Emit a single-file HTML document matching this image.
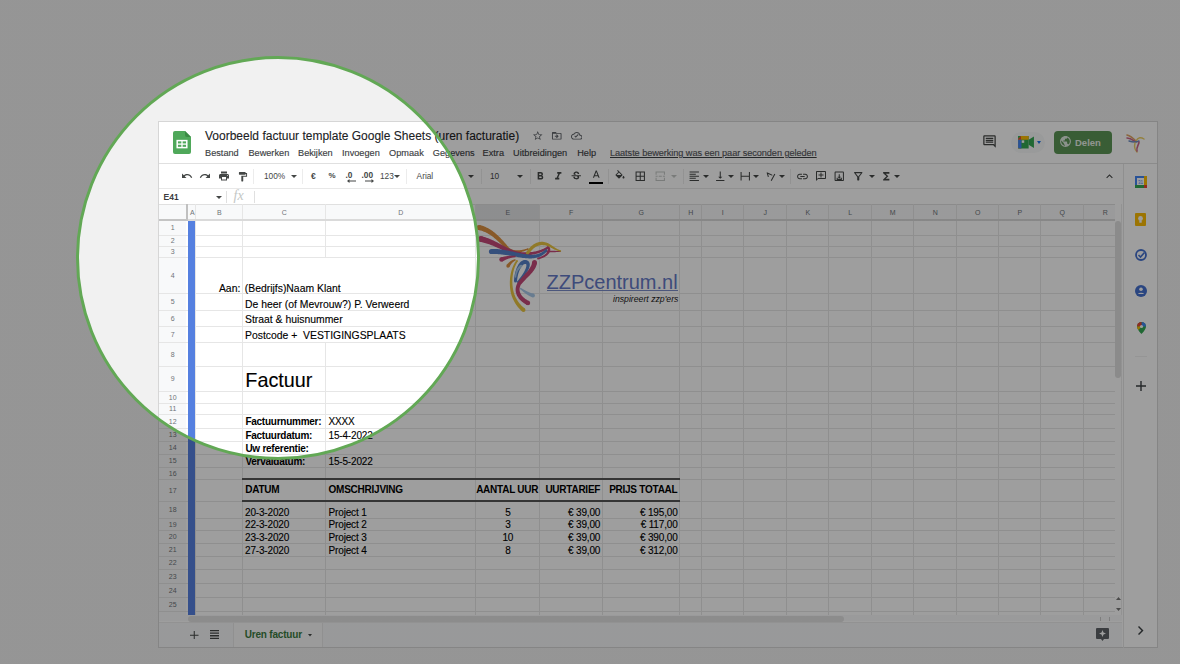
<!DOCTYPE html><html><head><meta charset="utf-8"><style>
*{box-sizing:border-box}
body{margin:0;width:1180px;height:664px;overflow:hidden;background:#f1f1f1;position:relative;font-family:"Liberation Sans",sans-serif}
.a{position:absolute}
.t{position:absolute;white-space:nowrap;line-height:1}
.hl{position:absolute;height:1px;background:#e6e6e6}
.vl{position:absolute;width:1px;background:#e6e6e6}
.rh{position:absolute;left:158px;width:28px;text-align:center;font-size:7px;color:#6f7479;line-height:1}
.ch{position:absolute;top:209px;text-align:center;font-size:7px;color:#6f7479;line-height:1;padding-left:1.5px}
.cell{position:absolute;white-space:nowrap;font-size:9.35px;color:#000;line-height:1}
.b{font-weight:bold}
.menu{position:absolute;top:149px;font-size:9.2px;color:#3c4043;line-height:1;white-space:nowrap;-webkit-text-stroke:0.15px #3c4043}
</style></head><body>
<div class="a" style="left:158px;top:121px;width:1000px;height:527px;background:#fff;border:1px solid #d6d6d6"></div><svg class="a" style="left:173px;top:131px" width="18" height="23" viewBox="0 0 18 23">
<path d="M0 2a2 2 0 0 1 2-2h10l6 6v15a2 2 0 0 1-2 2H2a2 2 0 0 1-2-2z" fill="#4fa85a"/>
<path d="M12 0l6 6h-4a2 2 0 0 1-2-2z" fill="#3a8a44"/>
<rect x="4.2" y="9.6" width="9.6" height="7" fill="none" stroke="#fff" stroke-width="1.5"/>
<line x1="4" y1="13.1" x2="14" y2="13.1" stroke="#fff" stroke-width="1.3"/>
<line x1="9" y1="9.5" x2="9" y2="17" stroke="#fff" stroke-width="1.3"/>
</svg><div class="t" style="left:205px;top:130px;font-size:12px;color:#202124;-webkit-text-stroke:0.1px #202124">Voorbeeld factuur template Google Sheets (uren facturatie)</div><div class="menu" style="left:205px">Bestand</div><div class="menu" style="left:248.4px">Bewerken</div><div class="menu" style="left:298px">Bekijken</div><div class="menu" style="left:342px">Invoegen</div><div class="menu" style="left:389.1px">Opmaak</div><div class="menu" style="left:432.8px">Gegevens</div><div class="menu" style="left:482.6px">Extra</div><div class="menu" style="left:513.1px">Uitbreidingen</div><div class="menu" style="left:577.2px">Help</div><div class="menu" style="left:610px;color:#5f6368;text-decoration:underline;letter-spacing:-0.07px">Laatste bewerking was een paar seconden geleden</div><div class="a" style="left:159px;top:163px;width:998px;height:1px;background:#e0e0e0"></div><div class="a" style="left:159px;top:188px;width:964px;height:1px;background:#e8e8e8"></div><div class="t" style="left:163.5px;top:192.5px;font-size:8.6px;color:#202124;-webkit-text-stroke:0.2px #202124">E41</div><div class="a" style="left:159px;top:204px;width:956px;height:16px;background:#f8f9fa;border-top:1px solid #e0e0e0"></div><div class="a" style="left:159px;top:220px;width:27px;height:395px;background:#f8f9fa"></div><div class="hl" style="left:159px;top:235px;width:956px"></div><div class="hl" style="left:159px;top:246px;width:956px"></div><div class="hl" style="left:159px;top:257px;width:956px"></div><div class="hl" style="left:159px;top:293px;width:956px"></div><div class="hl" style="left:159px;top:310px;width:956px"></div><div class="hl" style="left:159px;top:326px;width:956px"></div><div class="hl" style="left:159px;top:342px;width:956px"></div><div class="hl" style="left:159px;top:366px;width:956px"></div><div class="hl" style="left:159px;top:391px;width:956px"></div><div class="hl" style="left:159px;top:403px;width:956px"></div><div class="hl" style="left:159px;top:414px;width:956px"></div><div class="hl" style="left:159px;top:428px;width:956px"></div><div class="hl" style="left:159px;top:441px;width:956px"></div><div class="hl" style="left:159px;top:454px;width:956px"></div><div class="hl" style="left:159px;top:467px;width:956px"></div><div class="hl" style="left:159px;top:479px;width:956px"></div><div class="hl" style="left:159px;top:501px;width:956px"></div><div class="hl" style="left:159px;top:518px;width:956px"></div><div class="hl" style="left:159px;top:530px;width:956px"></div><div class="hl" style="left:159px;top:543px;width:956px"></div><div class="hl" style="left:159px;top:556px;width:956px"></div><div class="hl" style="left:159px;top:569px;width:956px"></div><div class="hl" style="left:159px;top:583px;width:956px"></div><div class="hl" style="left:159px;top:597px;width:956px"></div><div class="hl" style="left:159px;top:611px;width:956px"></div><div class="vl" style="left:195px;top:204px;height:411px"></div><div class="vl" style="left:242px;top:204px;height:411px"></div><div class="vl" style="left:325px;top:204px;height:411px"></div><div class="vl" style="left:475px;top:204px;height:411px"></div><div class="vl" style="left:539px;top:204px;height:411px"></div><div class="vl" style="left:602px;top:204px;height:411px"></div><div class="vl" style="left:679px;top:204px;height:411px"></div><div class="vl" style="left:701px;top:204px;height:411px"></div><div class="vl" style="left:743px;top:204px;height:411px"></div><div class="vl" style="left:786px;top:204px;height:411px"></div><div class="vl" style="left:828px;top:204px;height:411px"></div><div class="vl" style="left:871px;top:204px;height:411px"></div><div class="vl" style="left:913px;top:204px;height:411px"></div><div class="vl" style="left:956px;top:204px;height:411px"></div><div class="vl" style="left:998px;top:204px;height:411px"></div><div class="vl" style="left:1040px;top:204px;height:411px"></div><div class="vl" style="left:1083px;top:204px;height:411px"></div><div class="a" style="left:159px;top:219px;width:956px;height:2px;background:#dadada"></div><div class="a" style="left:186px;top:204px;width:2px;height:16px;background:#c0c0c0"></div><div class="a" style="left:159px;top:218.5px;width:29px;height:2px;background:#c4c4c4"></div><div class="a" style="left:188px;top:221px;width:7px;height:394px;background:#5580e0"></div><div class="rh" style="left:158.7px;top:224.0px">1</div><div class="rh" style="left:158.7px;top:237.0px">2</div><div class="rh" style="left:158.7px;top:248.0px">3</div><div class="rh" style="left:158.7px;top:271.5px">4</div><div class="rh" style="left:158.7px;top:298.0px">5</div><div class="rh" style="left:158.7px;top:314.5px">6</div><div class="rh" style="left:158.7px;top:330.5px">7</div><div class="rh" style="left:158.7px;top:350.5px">8</div><div class="rh" style="left:158.7px;top:375.0px">9</div><div class="rh" style="left:158.7px;top:393.5px">10</div><div class="rh" style="left:158.7px;top:405.0px">11</div><div class="rh" style="left:158.7px;top:417.5px">12</div><div class="rh" style="left:158.7px;top:431.0px">13</div><div class="rh" style="left:158.7px;top:444.0px">14</div><div class="rh" style="left:158.7px;top:457.0px">15</div><div class="rh" style="left:158.7px;top:469.5px">16</div><div class="rh" style="left:158.7px;top:486.5px">17</div><div class="rh" style="left:158.7px;top:506.0px">18</div><div class="rh" style="left:158.7px;top:520.5px">19</div><div class="rh" style="left:158.7px;top:533.0px">20</div><div class="rh" style="left:158.7px;top:546.0px">21</div><div class="rh" style="left:158.7px;top:559.0px">22</div><div class="rh" style="left:158.7px;top:572.5px">23</div><div class="rh" style="left:158.7px;top:586.5px">24</div><div class="rh" style="left:158.7px;top:600.5px">25</div><div class="ch" style="left:188px;width:7px">A</div><div class="ch" style="left:195px;width:47px">B</div><div class="ch" style="left:242px;width:83px">C</div><div class="ch" style="left:325px;width:150px">D</div><div class="ch" style="left:475px;width:64px">E</div><div class="ch" style="left:539px;width:63px">F</div><div class="ch" style="left:602px;width:77px">G</div><div class="ch" style="left:679px;width:22px">H</div><div class="ch" style="left:701px;width:42px">I</div><div class="ch" style="left:743px;width:43px">J</div><div class="ch" style="left:786px;width:42px">K</div><div class="ch" style="left:828px;width:43px">L</div><div class="ch" style="left:871px;width:42px">M</div><div class="ch" style="left:913px;width:43px">N</div><div class="ch" style="left:956px;width:42px">O</div><div class="ch" style="left:998px;width:42px">P</div><div class="ch" style="left:1040px;width:43px">Q</div><div class="ch" style="left:1083px;width:43px">R</div><div class="a" style="left:325px;top:258px;width:1px;height:35px;background:#fff"></div><div class="a" style="left:325px;top:294px;width:1px;height:16px;background:#fff"></div><div class="a" style="left:325px;top:311px;width:1px;height:15px;background:#fff"></div><div class="a" style="left:325px;top:327px;width:1px;height:15px;background:#fff"></div><div class="cell" style="right:939.70px;top:283.70px;font-size:10.4px;-webkit-text-stroke:0.12px #000;color:#000;letter-spacing:0px;">Aan:</div><div class="cell" style="left:244.8px;top:283.70px;font-size:10.4px;-webkit-text-stroke:0.12px #000;color:#000;letter-spacing:0px;">(Bedrijfs)Naam Klant</div><div class="cell" style="left:245px;top:299.50px;font-size:10.4px;-webkit-text-stroke:0.12px #000;color:#000;letter-spacing:0px;">De heer (of Mevrouw?) P. Verweerd</div><div class="cell" style="left:245px;top:315.40px;font-size:10.4px;-webkit-text-stroke:0.12px #000;color:#000;letter-spacing:0px;">Straat &amp; huisnummer</div><div class="cell" style="left:245px;top:330.90px;font-size:10.4px;-webkit-text-stroke:0.12px #000;color:#000;letter-spacing:0px;">Postcode +&nbsp; VESTIGINGSPLAATS</div><div class="cell" style="left:245.3px;top:370.54px;font-size:19.8px;-webkit-text-stroke:0.12px #000;color:#000;letter-spacing:0px;">Factuur</div><div class="cell" style="left:245.4px;top:416.94px;font-size:10px;font-weight:bold;color:#000;letter-spacing:-0.25px;">Factuurnummer:</div><div class="cell" style="left:328.5px;top:416.94px;font-size:10px;-webkit-text-stroke:0.12px #000;color:#000;letter-spacing:-0.17px;">XXXX</div><div class="cell" style="left:245.4px;top:430.54px;font-size:10px;font-weight:bold;color:#000;letter-spacing:-0.25px;">Factuurdatum:</div><div class="cell" style="left:328.5px;top:430.54px;font-size:10px;-webkit-text-stroke:0.12px #000;color:#000;letter-spacing:-0.17px;">15-4-2022</div><div class="cell" style="left:245.4px;top:443.64px;font-size:10px;font-weight:bold;color:#000;letter-spacing:-0.25px;">Uw referentie:</div><div class="cell" style="left:245.4px;top:456.64px;font-size:10px;font-weight:bold;color:#000;letter-spacing:-0.25px;">Vervaldatum:</div><div class="cell" style="left:328.5px;top:456.64px;font-size:10px;-webkit-text-stroke:0.12px #000;color:#000;letter-spacing:-0.17px;">15-5-2022</div><div class="a" style="left:242px;top:478px;width:438px;height:2px;background:#555"></div><div class="a" style="left:242px;top:499.5px;width:438px;height:2px;background:#555"></div><div class="cell" style="left:245.2px;top:484.94px;font-size:10px;font-weight:bold;color:#000;letter-spacing:-0.25px;">DATUM</div><div class="cell" style="left:328.6px;top:484.94px;font-size:10px;font-weight:bold;color:#000;letter-spacing:-0.25px;">OMSCHRIJVING</div><div class="cell" style="right:641.75px;top:484.94px;font-size:10px;font-weight:bold;color:#000;letter-spacing:-0.25px;">AANTAL UUR</div><div class="cell" style="right:579.85px;top:484.94px;font-size:10px;font-weight:bold;color:#000;letter-spacing:-0.25px;">UURTARIEF</div><div class="cell" style="right:502.55px;top:484.94px;font-size:10px;font-weight:bold;color:#000;letter-spacing:-0.25px;">PRIJS TOTAAL</div><div class="cell" style="left:245px;top:507.64px;font-size:10px;-webkit-text-stroke:0.12px #000;color:#000;letter-spacing:-0.17px;">20-3-2020</div><div class="cell" style="left:328.6px;top:507.64px;font-size:10px;-webkit-text-stroke:0.12px #000;color:#000;letter-spacing:-0.17px;">Project 1</div><div class="cell" style="left:457.88px;width:100px;text-align:center;top:507.64px;font-size:10px;-webkit-text-stroke:0.12px #000;color:#000;letter-spacing:-0.17px;">5</div><div class="cell" style="right:579.77px;top:507.64px;font-size:10px;-webkit-text-stroke:0.12px #000;color:#000;letter-spacing:-0.17px;">€ 39,00</div><div class="cell" style="right:502.47px;top:507.64px;font-size:10px;-webkit-text-stroke:0.12px #000;color:#000;letter-spacing:-0.17px;">€ 195,00</div><div class="cell" style="left:245px;top:520.43px;font-size:10px;-webkit-text-stroke:0.12px #000;color:#000;letter-spacing:-0.17px;">22-3-2020</div><div class="cell" style="left:328.6px;top:520.43px;font-size:10px;-webkit-text-stroke:0.12px #000;color:#000;letter-spacing:-0.17px;">Project 2</div><div class="cell" style="left:457.88px;width:100px;text-align:center;top:520.43px;font-size:10px;-webkit-text-stroke:0.12px #000;color:#000;letter-spacing:-0.17px;">3</div><div class="cell" style="right:579.77px;top:520.43px;font-size:10px;-webkit-text-stroke:0.12px #000;color:#000;letter-spacing:-0.17px;">€ 39,00</div><div class="cell" style="right:502.47px;top:520.43px;font-size:10px;-webkit-text-stroke:0.12px #000;color:#000;letter-spacing:-0.17px;">€ 117,00</div><div class="cell" style="left:245px;top:533.24px;font-size:10px;-webkit-text-stroke:0.12px #000;color:#000;letter-spacing:-0.17px;">23-3-2020</div><div class="cell" style="left:328.6px;top:533.24px;font-size:10px;-webkit-text-stroke:0.12px #000;color:#000;letter-spacing:-0.17px;">Project 3</div><div class="cell" style="left:457.88px;width:100px;text-align:center;top:533.24px;font-size:10px;-webkit-text-stroke:0.12px #000;color:#000;letter-spacing:-0.17px;">10</div><div class="cell" style="right:579.77px;top:533.24px;font-size:10px;-webkit-text-stroke:0.12px #000;color:#000;letter-spacing:-0.17px;">€ 39,00</div><div class="cell" style="right:502.47px;top:533.24px;font-size:10px;-webkit-text-stroke:0.12px #000;color:#000;letter-spacing:-0.17px;">€ 390,00</div><div class="cell" style="left:245px;top:545.83px;font-size:10px;-webkit-text-stroke:0.12px #000;color:#000;letter-spacing:-0.17px;">27-3-2020</div><div class="cell" style="left:328.6px;top:545.83px;font-size:10px;-webkit-text-stroke:0.12px #000;color:#000;letter-spacing:-0.17px;">Project 4</div><div class="cell" style="left:457.88px;width:100px;text-align:center;top:545.83px;font-size:10px;-webkit-text-stroke:0.12px #000;color:#000;letter-spacing:-0.17px;">8</div><div class="cell" style="right:579.77px;top:545.83px;font-size:10px;-webkit-text-stroke:0.12px #000;color:#000;letter-spacing:-0.17px;">€ 39,00</div><div class="cell" style="right:502.47px;top:545.83px;font-size:10px;-webkit-text-stroke:0.12px #000;color:#000;letter-spacing:-0.17px;">€ 312,00</div><svg class="a" style="left:181.00px;top:170.30px;" width="12" height="12" viewBox="0 0 24 24"><path d="M12.5 8c-2.65 0-5.05.99-6.9 2.6L2 7v9h9l-3.62-3.62c1.39-1.16 3.16-1.88 5.12-1.88 3.54 0 6.550 2.31 7.6 5.5l2.37-.78C21.08 11.03 17.15 8 12.5 8z" fill="#444746"/></svg><svg class="a" style="left:199.30px;top:170.30px;" width="12" height="12" viewBox="0 0 24 24"><path d="M18.4 10.6C16.55 8.99 14.15 8 11.5 8c-4.65 0-8.58 3.03-9.960 7.22L3.9 16c1.05-3.19 4.05-5.5 7.6-5.5 1.95 0 3.73.72 5.12 1.88L13 16h9V7l-3.6 3.6z" fill="#444746"/></svg><svg class="a" style="left:217.80px;top:170.30px;" width="12" height="12" viewBox="0 0 24 24"><path d="M19 8H5c-1.66 0-3 1.34-3 3v6h4v4h12v-4h4v-6c0-1.66-1.34-3-3-3zm-3 11H8v-5h8v5zm3-7c-.55 0-1-.45-1-1s.45-1 1-1 1 .45 1 1-.45 1-1 1zm-1-9H6v4h12V3z" fill="#444746"/></svg><svg class="a" style="left:236.55px;top:170.55px;" width="11.5" height="11.5" viewBox="0 0 24 24"><path d="M18 4V3c0-.55-.45-1-1-1H5c-.55 0-1 .45-1 1v4c0 .55.45 1 1 1h12c.55 0 1-.45 1-1V6h1v4H9v11c0 .55.45 1 1 1h2c.55 0 1-.45 1-1v-9h8V4h-3z" fill="#444746"/></svg><div class="a" style="left:253px;top:169px;width:1px;height:15px;background:#ececec"></div><div class="t" style="left:264px;top:172.3px;font-size:8.3px;color:#444746">100%</div><svg class="a" style="left:291.2px;top:174.8px" width="6" height="3" viewBox="0 0 6 3"><path d="M0 0h6L3 3z" fill="#444746"/></svg><div class="a" style="left:302px;top:169px;width:1px;height:15px;background:#ececec"></div><div class="t" style="left:311px;top:172.10000000000002px;font-size:8.5px;color:#444746;font-weight:bold">€</div><div class="t" style="left:328.5px;top:172.10000000000002px;font-size:8px;color:#444746;font-weight:bold">%</div><div class="t" style="left:345.5px;top:171.3px;font-size:8.3px;color:#444746;font-weight:bold">.0</div><svg class="a" style="left:347px;top:179.3px" width="9" height="4" viewBox="0 0 9 4"><path d="M0 2l2.5-2v1.4H9v1.2H2.5V4z" fill="#444746"/></svg><div class="t" style="left:361.5px;top:171.3px;font-size:8.3px;color:#444746;font-weight:bold">.00</div><svg class="a" style="left:365px;top:179.3px" width="9" height="4" viewBox="0 0 9 4"><path d="M9 2l-2.5-2v1.4H0v1.2h6.5V4z" fill="#444746"/></svg><div class="t" style="left:380px;top:172.10000000000002px;font-size:8.3px;color:#444746">123</div><svg class="a" style="left:394.3px;top:174.8px" width="6" height="3" viewBox="0 0 6 3"><path d="M0 0h6L3 3z" fill="#444746"/></svg><div class="a" style="left:406px;top:169px;width:1px;height:15px;background:#ececec"></div><div class="t" style="left:416.6px;top:172.10000000000002px;font-size:8.3px;color:#444746">Arial</div><svg class="a" style="left:467.8px;top:174.8px" width="6" height="3" viewBox="0 0 6 3"><path d="M0 0h6L3 3z" fill="#444746"/></svg><div class="a" style="left:480.5px;top:169px;width:1px;height:15px;background:#ececec"></div><div class="t" style="left:490px;top:172.10000000000002px;font-size:8.3px;color:#444746">10</div><svg class="a" style="left:517px;top:174.8px" width="6" height="3" viewBox="0 0 6 3"><path d="M0 0h6L3 3z" fill="#444746"/></svg><div class="a" style="left:529.5px;top:169px;width:1px;height:15px;background:#ececec"></div><svg class="a" style="left:533.75px;top:170.05px;" width="12.5" height="12.5" viewBox="0 0 24 24"><path d="M15.6 10.79c.97-.67 1.650-1.77 1.65-2.79 0-2.26-1.75-4-4-4H7v14h7.04c2.09 0 3.71-1.7 3.71-3.79 0-1.52-.86-2.82-2.15-3.42zM10 6.5h3c.83 0 1.5.67 1.5 1.5s-.67 1.5-1.5 1.5h-3v-3zm3.5 9H10v-3h3.5c.83 0 1.5.67 1.5 1.5s-.67 1.5-1.5 1.5z" fill="#444746"/></svg><svg class="a" style="left:552.25px;top:170.05px;" width="12.5" height="12.5" viewBox="0 0 24 24"><path d="M10 4v3h2.21l-3.42 8H6v3h8v-3h-2.21l3.42-8H18V4z" fill="#444746"/></svg><svg class="a" style="left:570.05px;top:170.05px;" width="12.5" height="12.5" viewBox="0 0 24 24"><path d="M7.24 8.75c-.26-.48-.39-1.03-.39-1.67 0-.61.13-1.16.4-1.67.26-.5.63-.93 1.11-1.29.48-.35 1.05-.63 1.7-.83.66-.19 1.39-.29 2.18-.29.81 0 1.54.11 2.21.34.66.22 1.230.54 1.69.94.47.4.83.88 1.08 1.43s.38 1.15.38 1.81h-3.01c0-.31-.05-.59-.15-.85-.09-.27-.24-.49-.44-.68-.2-.19-.45-.33-.75-.44-.3-.1-.66-.16-1.06-.16-.39 0-.74.04-1.03.13s-.53.21-.72.36c-.19.16-.34.34-.44.55-.1.21-.15.43-.15.66 0 .48.25.88.74 1.21.38.25.77.48 1.41.7H7.39c-.05-.08-.11-.17-.15-.25zM21 12v-2H3v2h9.62c.18.07.4.14.55.2.37.17.66.34.87.51s.35.36.43.57c.07.2.11.43.11.69 0 .23-.05.45-.14.66-.09.2-.23.38-.42.53-.19.15-.42.26-.71.35-.29.08-.63.13-1.01.13-.43 0-.83-.04-1.18-.13s-.66-.23-.91-.42c-.25-.19-.45-.44-.59-.75s-.25-.76-.25-1.21H6.4c0 .55.08 1.13.24 1.58s.37.85.65 1.21c.28.35.6.66.98.92.37.26.78.48 1.22.65.44.17.9.3 1.38.39.48.08.96.13 1.44.13.8 0 1.53-.09 2.18-.28s1.21-.45 1.67-.79c.46-.34.82-.77 1.07-1.27s.38-1.07.38-1.71c0-.6-.1-1.14-.31-1.61-.05-.11-.11-.23-.17-.33H21z" fill="#444746"/></svg><svg class="a" style="left:589.55px;top:168.55px;" width="12.5" height="12.5" viewBox="0 0 24 24"><path d="M11 3L5.5 17h2.25l1.12-3h6.25l1.12 3h2.25L13 3h-2zm-1.38 9L12 5.67 14.38 12H9.62z" fill="#444746"/></svg><div class="a" style="left:589px;top:181.5px;width:13.5px;height:2.5px;background:#000"></div><div class="a" style="left:608px;top:169px;width:1px;height:15px;background:#ececec"></div><svg class="a" style="left:614.40px;top:170.30px;" width="12" height="12" viewBox="0 0 24 24"><path d="M16.56 8.94L7.62 0 6.21 1.41l2.38 2.38-5.15 5.150c-.59.59-.59 1.54 0 2.12l5.5 5.5c.29.29.68.44 1.06.44s.77-.15 1.06-.44l5.5-5.5c.59-.58.59-1.53 0-2.12zM5.21 10L10 5.21 14.79 10H5.21zM19 11.5s-2 2.17-2 3.5c0 1.1.9 2 2 2s2-.9 2-2c0-1.33-2-3.5-2-3.5z" fill="#444746"/></svg><svg class="a" style="left:633.75px;top:170.05px;" width="12.5" height="12.5" viewBox="0 0 24 24"><path d="M3 3v18h18V3H3zm8 16H5v-6h6v6zm0-8H5V5h6v6zm8 8h-6v-6h6v6zm0-8h-6V5h6v6z" fill="#444746"/></svg><svg class="a" style="left:653.75px;top:170.05px;" width="12.5" height="12.5" viewBox="0 0 24 24"><path d="M3 3h18v6h-2V5H5v4H3zM3 15h2v4h14v-4h2v6H3zM3 11h4v2H3zM9 11h6v2H9zM17 11h4v2h-4z" fill="#c4c7c5"/></svg><svg class="a" style="left:671.2px;top:174.8px" width="6" height="3" viewBox="0 0 6 3"><path d="M0 0h6L3 3z" fill="#c4c7c5"/></svg><div class="a" style="left:682.5px;top:169px;width:1px;height:15px;background:#ececec"></div><svg class="a" style="left:687.95px;top:170.05px;" width="12.5" height="12.5" viewBox="0 0 24 24"><path d="M15 15H3v2h12v-2zm0-8H3v2h12V7zM3 13h18v-2H3v2zm0 8h18v-2H3v2zM3 3v2h18V3H3z" fill="#444746"/></svg><svg class="a" style="left:703px;top:174.8px" width="6" height="3" viewBox="0 0 6 3"><path d="M0 0h6L3 3z" fill="#444746"/></svg><svg class="a" style="left:713.55px;top:170.05px;" width="12.5" height="12.5" viewBox="0 0 24 24"><path d="M16 13h-3V3h-2v10H8l4 4 4-4zM4 19v2h16v-2H4z" fill="#444746"/></svg><svg class="a" style="left:728.4px;top:174.8px" width="6" height="3" viewBox="0 0 6 3"><path d="M0 0h6L3 3z" fill="#444746"/></svg><svg class="a" style="left:739.05px;top:170.05px;" width="12.5" height="12.5" viewBox="0 0 24 24"><path d="M3 4h2v16H3zM19 4h2v16h-2zM5 11h14v2H5z" fill="#444746"/></svg><svg class="a" style="left:753px;top:174.8px" width="6" height="3" viewBox="0 0 6 3"><path d="M0 0h6L3 3z" fill="#444746"/></svg><svg class="a" style="left:764.85px;top:170.05px;" width="12.5" height="12.5" viewBox="0 0 24 24"><path d="M3 5h2l9 4v2L5 7zM3 5l2 0 2.5 8-2 .5zM11 20l7-13 1.8 1-7 13z" fill="#444746"/></svg><svg class="a" style="left:779.2px;top:174.8px" width="6" height="3" viewBox="0 0 6 3"><path d="M0 0h6L3 3z" fill="#444746"/></svg><div class="a" style="left:789.5px;top:169px;width:1px;height:15px;background:#ececec"></div><svg class="a" style="left:795.80px;top:169.80px;" width="13" height="13" viewBox="0 0 24 24"><path d="M3.9 12c0-1.71 1.39-3.1 3.1-3.1h4V7H7c-2.76 0-5 2.24-5 5s2.24 5 5 5h4v-1.9H7c-1.71 0-3.1-1.39-3.1-3.1zM8 13h8v-2H8v2zm9-6h-4v1.9h4c1.71 0 3.1 1.39 3.1 3.1s-1.39 3.1-3.1 3.1h-4V17h4c2.76 0 5-2.24 5-5s-2.24-5-5-5z" fill="#444746"/></svg><svg class="a" style="left:814.70px;top:170.30px;" width="12" height="12" viewBox="0 0 24 24"><path d="M20 2H4c-1.1 0-2 .9-2 2v18l4-4h14c1.1 0 2-.9 2-2V4c0-1.1-.9-2-2-2zm0 14H6l-2 2V4h16v12zM13 5h-2v4H7v2h4v4h2v-4h4V9h-4z" fill="#444746"/></svg><svg class="a" style="left:832.75px;top:170.05px;" width="12.5" height="12.5" viewBox="0 0 24 24"><path d="M19 3H5c-1.1 0-2 .9-2 2v14c0 1.1.9 2 2 2h14c1.1 0 2-.9 2-2V5c0-1.1-.9-2-2-2zm0 16H5V5h14v14zM11 8h2v5h2.5L12 16.5 8.5 13H11zM7 15h2v2h6v-2h2v4H7z" fill="#444746"/></svg><svg class="a" style="left:851.75px;top:170.05px;" width="12.5" height="12.5" viewBox="0 0 24 24"><path d="M7 6h10l-5.01 6.3L7 6zm-2.75-.39C6.27 8.2 10 13 10 13v6c0 .55.45 1 1 1h2c.55 0 1-.45 1-1v-6s3.72-4.8 5.74-7.39c.51-.66.04-1.61-.79-1.61H5.04c-.83 0-1.3.95-.79 1.61z" fill="#444746"/></svg><svg class="a" style="left:869px;top:174.8px" width="6" height="3" viewBox="0 0 6 3"><path d="M0 0h6L3 3z" fill="#444746"/></svg><svg class="a" style="left:880.15px;top:170.05px;" width="12.5" height="12.5" viewBox="0 0 24 24"><path d="M18 4H6v2l6.5 6L6 18v2h12v-3h-7l5-5-5-5h7z" fill="#444746"/></svg><svg class="a" style="left:893.6px;top:174.8px" width="6" height="3" viewBox="0 0 6 3"><path d="M0 0h6L3 3z" fill="#444746"/></svg><svg class="a" style="left:1102.50px;top:169.80px;" width="13" height="13" viewBox="0 0 24 24"><path d="M12 8l-6 6 1.41 1.41L12 10.830l4.59 4.58L18 14z" fill="#444746"/></svg><svg class="a" style="left:531.55px;top:129.55px;" width="11.5" height="11.5" viewBox="0 0 24 24"><path d="M22 9.24l-7.19-.62L12 2 9.19 8.63 2 9.24l5.46 4.73L5.82 21 12 17.27 18.18 21l-1.63-7.03L22 9.24zM12 15.4l-3.76 2.27 1-4.28-3.32-2.88 4.38-.38L12 6.1l1.71 4.04 4.380.38-3.32 2.88 1 4.28L12 15.4z" fill="#5f6368"/></svg><svg class="a" style="left:550.85px;top:129.55px;" width="11.5" height="11.5" viewBox="0 0 24 24"><path d="M20 6h-8l-2-2H4c-1.1 0-1.99.9-1.99 2L2 18c0 1.1.9 2 2 2h16c1.1 0 2-.9 2-2V8c0-1.1-.9-2-2-2zm0 12H4V8h16v10zM12.16 12H8v2h4.16l-1.59 1.59L11.99 17 16 13.01 11.99 9l-1.41 1.41z" fill="#5f6368"/></svg><svg class="a" style="left:570.65px;top:129.55px;" width="11.5" height="11.5" viewBox="0 0 24 24"><path d="M19.35 10.04C18.67 6.59 15.64 4 12 4 9.11 4 6.6 5.64 5.35 8.04 2.34 8.36 0 10.91 0 14c0 3.31 2.69 6 6 6h13c2.76 0 5-2.24 5-5 0-2.64-2.05-4.78-4.65-4.96zM19 18H6c-2.21 0-4-1.79-4-4 0-2.05 1.53-3.76 3.56-3.97l1.07-.11.5-.95C8.08 7.14 9.94 6 12 6c2.62 0 4.88 1.86 5.39 4.43l.3 1.5 1.53.11c1.56.1 2.78 1.41 2.78 2.96 0 1.65-1.35 3-3 3zM10 16l-3-3 1.4-1.4 1.6 1.6 4.6-4.6L16 10z" fill="#5f6368"/></svg><svg class="a" style="left:982.00px;top:134.30px;" width="15" height="15" viewBox="0 0 24 24"><path d="M21.99 4c0-1.1-.89-2-1.99-2H4c-1.1 0-2 .9-2 2v12c0 1.1.9 2 2 2h14l4 4-.01-18zM20 4v13.170L18.83 16H4V4h16zM6 12h12v2H6zm0-3h12v2H6zm0-3h12v2H6z" fill="#444746"/></svg><div class="a" style="left:1011px;top:132px;width:34px;height:21px;border-radius:11px;background:#f7f8f9"></div><svg class="a" style="left:1017.5px;top:136px" width="16.5" height="12.5" viewBox="0 0 17 13">
<path d="M0 0h11v13H0z" fill="#34a853"/><path d="M0 3l3-3h8v4H3v9H0z" fill="#fbbc04"/><path d="M0 3l3-3v4H0z" fill="#ea4335"/><path d="M0 4h3.5v9H1a1 1 0 0 1-1-1z" fill="#4285f4"/>
<path d="M11 0l0 13M11 4l5.5-3.5v12L11 9z" fill="#34a853"/><rect x="3.8" y="4.5" width="2.6" height="2.6" fill="#fff"/>
</svg><svg class="a" style="left:1036.5px;top:140.5px" width="4" height="3" viewBox="0 0 4 3"><path d="M0 0h4L2 3z" fill="#1a73e8"/></svg><div class="a" style="left:1054px;top:131px;width:57.5px;height:23px;border-radius:4px;background:#5c9656"></div><svg class="a" style="left:1059.20px;top:135.30px;" width="13" height="13" viewBox="0 0 24 24"><path d="M12 2C6.48 2 2 6.48 2 12s4.48 10 10 10 10-4.48 10-10S17.52 2 12 2zm-1 17.93c-3.95-.49-7-3.85-7-7.93 0-.62.08-1.21.21-1.790L9 15v1c0 1.1.9 2 2 2v1.93zm6.9-2.54c-.26-.81-1-1.39-1.9-1.39h-1v-3c0-.55-.45-1-1-1H8v-2h2c.55 0 1-.45 1-1V7h2c1.1 0 2-.9 2-2v-.41c2.93 1.19 5 4.06 5 7.41 0 2.08-.8 3.970-2.1 5.39z" fill="#e0ece0"/></svg><div class="t" style="left:1075px;top:137.5px;font-size:9.5px;color:#e8f0e8;font-weight:bold">Delen</div><svg class="a" style="left:215.5px;top:195.5px" width="6" height="3" viewBox="0 0 6 3"><path d="M0 0h6L3 3z" fill="#444746"/></svg><div class="a" style="left:226px;top:191px;width:1px;height:12px;background:#e0e0e0"></div><div class="t" style="left:233.5px;top:189px;font-size:14px;color:#c4c7c5;font-family:Liberation Serif;font-style:italic">fx</div><div class="a" style="left:254px;top:191px;width:1px;height:12px;background:#e0e0e0"></div><div class="a" style="left:476px;top:205px;width:63px;height:14px;background:#e4e5e7"></div><div class="ch" style="left:475px;width:64px">E</div><div class="a" style="left:1115px;top:221px;width:6px;height:157px;border-radius:3px;background:#e0e0e0"></div><div class="a" style="left:1123px;top:164px;width:1px;height:484px;background:#e6e6e6"></div><svg class="a" style="left:1134.5px;top:176px" width="12" height="12" viewBox="0 0 12 12">
<rect x="0" y="0" width="12" height="12" fill="#fbbc04"/><rect x="0" y="0" width="9" height="9" fill="#4285f4"/><rect x="0" y="9" width="9" height="3" fill="#34a853"/><rect x="9" y="9" width="3" height="3" fill="#ea4335"/>
<rect x="2" y="2" width="7" height="7" fill="#fff"/><text x="5.5" y="7.6" font-size="4.5" text-anchor="middle" fill="#4285f4" font-family="Liberation Sans">31</text></svg><svg class="a" style="left:1135px;top:212.5px" width="11" height="13" viewBox="0 0 11 13">
<path d="M0 1a1 1 0 0 1 1-1h9a1 1 0 0 1 1 1v11a1 1 0 0 1-1 1H1a1 1 0 0 1-1-1z" fill="#fbbc04"/>
<circle cx="5.5" cy="5.5" r="2.4" fill="#fff"/><rect x="4.3" y="7.5" width="2.4" height="2.2" fill="#fff"/></svg><svg class="a" style="left:1134.8px;top:249px" width="12" height="12" viewBox="0 0 12 12">
<circle cx="6" cy="6" r="5" fill="none" stroke="#4470cf" stroke-width="1.8"/><path d="M3.5 6l2 2 4-4.5" fill="none" stroke="#4470cf" stroke-width="1.6"/></svg><svg class="a" style="left:1134.8px;top:285.3px" width="12" height="12" viewBox="0 0 12 12">
<circle cx="6" cy="6" r="6" fill="#4470cf"/><circle cx="6" cy="4.3" r="1.8" fill="#fff"/><path d="M2.8 9a3.5 2.3 0 0 1 6.4 0z" fill="#fff"/></svg><svg class="a" style="left:1136.5px;top:322px" width="9" height="12" viewBox="0 0 9 12">
<path d="M4.5 0A4.5 4.5 0 0 1 9 4.5C9 7.5 4.5 12 4.5 12S0 7.5 0 4.5A4.5 4.5 0 0 1 4.5 0z" fill="#34a853"/>
<path d="M4.5 0A4.5 4.5 0 0 1 9 4.5L4.5 4.5z" fill="#4285f4"/><path d="M0 4.5A4.5 4.5 0 0 1 4.5 0V4.5z" fill="#ea4335"/><path d="M0 4.5h4.5L1.5 8C.5 6.8 0 5.6 0 4.5z" fill="#fbbc04"/>
<circle cx="4.5" cy="4.5" r="1.6" fill="#fff"/></svg><div class="a" style="left:1135px;top:356px;width:12px;height:1px;background:#f0f0f0"></div><svg class="a" style="left:1136px;top:381px" width="10" height="10" viewBox="0 0 10 10"><path d="M4.3 0h1.4v4.3H10v1.4H5.7V10H4.3V5.7H0V4.3h4.3z" fill="#3c4043"/></svg><svg class="a" style="left:1137.5px;top:626px" width="6" height="9" viewBox="0 0 6 9"><path d="M1 0l4.5 4.5L1 9 0 8l3.5-3.5L0 1z" fill="#3c4043"/></svg><svg class="a" style="left:1126px;top:133px;opacity:0.75" width="19" height="20" viewBox="0 0 19 20">
<path d="M1 2c4 1 7 4 9 6" stroke="#d8862e" stroke-width="1.6" fill="none" stroke-linecap="round"/>
<path d="M1 5c4 0 7 3 9 4" stroke="#b8315f" stroke-width="1.6" fill="none" stroke-linecap="round"/>
<path d="M10 8c2-4 5-4 8-2" stroke="#e8c030" stroke-width="1.4" fill="none" stroke-linecap="round"/>
<path d="M3 8c3 1 6 2 10 0" stroke="#3d68b0" stroke-width="1.4" fill="none" stroke-linecap="round"/>
<path d="M9 10c-1 4 0 7 2 9" stroke="#e8c030" stroke-width="1.4" fill="none" stroke-linecap="round"/>
<path d="M13 9c0 3-3 5-2 9" stroke="#b8315f" stroke-width="1.6" fill="none" stroke-linecap="round"/>
</svg><div class="a" style="left:159px;top:615px;width:963px;height:6px;background:#f8f9fa"></div><div class="a" style="left:188px;top:616px;width:656px;height:6px;border-radius:3px;background:#e2e2e2"></div><div class="a" style="left:159px;top:622px;width:963px;height:25px;background:#f6f7f8;border-top:1px solid #ebebeb"></div><div class="a" style="left:233px;top:623px;width:90px;height:24px;background:#fafafa;border-left:1px solid #e8e8e8;border-right:1px solid #e8e8e8"></div><svg class="a" style="left:190px;top:630.5px" width="8.5" height="8.5" viewBox="0 0 10 10"><path d="M4.4 0h1.2v4.4H10v1.2H5.6V10H4.4V5.6H0V4.4h4.4z" fill="#444746"/></svg><svg class="a" style="left:210px;top:630px" width="9" height="9" viewBox="0 0 9 9"><path d="M0 0h9v1.3H0zM0 2.55h9v1.3H0zM0 5.1h9v1.3H0zM0 7.65h9v1.3H0z" fill="#444746"/></svg><div class="t" style="left:244.8px;top:629.6px;font-size:10px;font-weight:bold;color:#3a7a40;letter-spacing:-0.2px">Uren factuur</div><svg class="a" style="left:308.3px;top:634px" width="4" height="2.5" viewBox="0 0 4 2.5"><path d="M0 0h4L2 2.5z" fill="#444746"/></svg><div class="a" style="left:1121px;top:204px;width:1px;height:411px;background:#ececec"></div><svg class="a" style="left:1116px;top:597px" width="5" height="3" viewBox="0 0 5 3"><path d="M0 3L2.5 0 5 3z" fill="#777"/></svg><svg class="a" style="left:1116px;top:608px" width="5" height="3" viewBox="0 0 5 3"><path d="M0 0h5L2.5 3z" fill="#777"/></svg><div class="a" style="left:1100px;top:617px;width:1px;height:4px;background:#ccc"></div><div class="a" style="left:1109px;top:617px;width:1px;height:4px;background:#ccc"></div><svg class="a" style="left:1096px;top:628px" width="13" height="13" viewBox="0 0 13 13"><path d="M0 1a1 1 0 0 1 1-1h11a1 1 0 0 1 1 1v9a1 1 0 0 1-1 1H8l-1.5 2L5 11H1a1 1 0 0 1-1-1z" fill="#5f6368"/><path d="M6.5 2l1 2.5 2.5 1-2.5 1-1 2.5-1-2.5-2.5-1 2.5-1z" fill="#fff"/></svg><svg class="a" style="left:470px;top:215px" width="100" height="105" viewBox="470 215 100 105"><path d="M478.43 230.04 L479.29 230.21 L480.10 230.39 L480.90 230.60 L481.70 230.84 L482.49 231.10 L483.27 231.38 L484.05 231.69 L484.81 232.01 L485.58 232.36 L486.33 232.73 L487.08 233.11 L487.82 233.52 L488.56 233.94 L489.29 234.38 L490.01 234.84 L490.72 235.31 L491.43 235.80 L492.13 236.30 L492.82 236.82 L493.51 237.35 L494.19 237.89 L494.86 238.44 L495.52 238.99 L496.18 239.56 L496.83 240.14 L497.47 240.72 L498.11 241.31 L498.74 241.91 L499.36 242.50 L499.97 243.11 L500.58 243.71 L501.18 244.32 L501.77 244.92 L502.35 245.53 L502.93 246.14 L503.50 246.74 L504.07 247.34 L504.63 247.94 L505.18 248.53 L505.76 249.16 L506.25 249.60 L506.72 249.97 L507.19 250.32 L507.68 250.64 L508.18 250.94 L508.68 251.21 L509.19 251.46 L509.72 251.68 L510.24 251.88 L510.78 252.05 L511.32 252.21 L511.86 252.34 L512.41 252.45 L512.97 252.54 L513.53 252.61 L514.09 252.67 L514.66 252.70 L515.23 252.72 L515.80 252.72 L516.37 252.70 L516.95 252.67 L517.53 252.62 L518.12 252.56 L518.70 252.48 L519.29 252.39 L519.88 252.28 L520.47 252.17 L521.06 252.04 L521.66 251.89 L522.25 251.74 L522.85 251.57 L523.45 251.40 L524.05 251.21 L524.65 251.02 L525.25 250.81 L525.85 250.60 L526.45 250.37 L527.05 250.14 L527.65 249.90 L528.24 249.66 L527.76 248.34 L527.15 248.54 L526.55 248.73 L525.95 248.90 L525.36 249.07 L524.76 249.23 L524.17 249.39 L523.58 249.53 L523.00 249.66 L522.42 249.78 L521.84 249.89 L521.27 249.98 L520.70 250.07 L520.13 250.14 L519.58 250.20 L519.03 250.25 L518.48 250.29 L517.94 250.31 L517.41 250.32 L516.89 250.32 L516.38 250.30 L515.87 250.27 L515.37 250.22 L514.88 250.16 L514.40 250.09 L513.94 250.00 L513.48 249.89 L513.03 249.77 L512.59 249.64 L512.17 249.49 L511.75 249.32 L511.35 249.14 L510.96 248.95 L510.57 248.74 L510.20 248.51 L509.84 248.27 L509.50 248.01 L509.16 247.73 L508.83 247.44 L508.51 247.13 L508.24 246.84 L507.77 246.26 L507.24 245.63 L506.71 245.00 L506.17 244.36 L505.63 243.71 L505.07 243.06 L504.50 242.41 L503.93 241.75 L503.34 241.10 L502.75 240.44 L502.14 239.78 L501.53 239.13 L500.91 238.47 L500.27 237.82 L499.63 237.18 L498.97 236.53 L498.31 235.90 L497.63 235.27 L496.94 234.64 L496.24 234.03 L495.53 233.42 L494.81 232.83 L494.07 232.24 L493.33 231.67 L492.57 231.11 L491.79 230.56 L491.01 230.03 L490.21 229.52 L489.40 229.02 L488.57 228.54 L487.73 228.08 L486.88 227.64 L486.01 227.22 L485.13 226.82 L484.23 226.44 L483.32 226.09 L482.40 225.77 L481.46 225.47 L480.50 225.20 L479.57 224.96Z" fill="#dc9040"/><circle cx="479.00" cy="227.50" r="2.60" fill="#dc9040"/><circle cx="528.00" cy="249.00" r="0.70" fill="#dc9040"/><path d="M480.13 241.82 L481.10 242.02 L482.02 242.22 L482.94 242.44 L483.84 242.68 L484.73 242.92 L485.61 243.17 L486.48 243.44 L487.35 243.71 L488.20 244.00 L489.04 244.29 L489.88 244.60 L490.70 244.91 L491.52 245.22 L492.34 245.55 L493.14 245.87 L493.94 246.21 L494.74 246.54 L495.53 246.88 L496.31 247.22 L497.10 247.57 L497.87 247.91 L498.65 248.26 L499.42 248.61 L500.19 248.95 L500.95 249.29 L501.72 249.63 L502.48 249.97 L503.25 250.30 L504.01 250.62 L504.77 250.94 L505.54 251.26 L506.30 251.56 L507.07 251.86 L507.84 252.15 L508.61 252.42 L509.38 252.69 L510.16 252.95 L510.94 253.19 L511.72 253.41 L512.50 253.62 L513.36 253.87 L514.24 254.10 L515.13 254.31 L516.04 254.50 L516.94 254.67 L517.86 254.82 L518.78 254.96 L519.71 255.07 L520.64 255.16 L521.58 255.23 L522.52 255.29 L523.46 255.32 L524.40 255.33 L525.35 255.33 L526.30 255.30 L527.25 255.26 L528.20 255.20 L529.15 255.11 L530.10 255.01 L531.05 254.89 L531.99 254.75 L532.93 254.59 L533.87 254.41 L534.80 254.21 L535.73 253.99 L536.65 253.76 L537.57 253.50 L538.47 253.23 L539.38 252.93 L540.27 252.62 L541.15 252.29 L542.03 251.93 L542.89 251.56 L543.74 251.17 L544.59 250.76 L545.42 250.33 L546.23 249.88 L547.04 249.42 L547.83 248.93 L548.59 248.43 L547.41 246.57 L546.66 247.03 L545.91 247.46 L545.14 247.87 L544.36 248.27 L543.57 248.64 L542.76 249.00 L541.95 249.34 L541.13 249.67 L540.29 249.97 L539.45 250.26 L538.60 250.52 L537.74 250.77 L536.88 251.00 L536.01 251.22 L535.14 251.41 L534.26 251.59 L533.37 251.75 L532.49 251.89 L531.60 252.01 L530.70 252.11 L529.81 252.20 L528.92 252.26 L528.03 252.31 L527.13 252.34 L526.24 252.35 L525.35 252.35 L524.47 252.32 L523.58 252.28 L522.70 252.22 L521.83 252.14 L520.96 252.05 L520.10 251.93 L519.25 251.80 L518.40 251.65 L517.56 251.48 L516.73 251.30 L515.91 251.09 L515.10 250.87 L514.30 250.64 L513.50 250.38 L512.78 250.12 L512.07 249.86 L511.37 249.58 L510.67 249.29 L509.96 248.98 L509.26 248.67 L508.56 248.34 L507.85 248.01 L507.15 247.66 L506.44 247.31 L505.73 246.94 L505.01 246.57 L504.29 246.20 L503.57 245.82 L502.84 245.43 L502.11 245.03 L501.37 244.64 L500.62 244.24 L499.87 243.84 L499.10 243.43 L498.33 243.03 L497.56 242.62 L496.77 242.21 L495.97 241.81 L495.16 241.41 L494.34 241.01 L493.51 240.61 L492.67 240.22 L491.81 239.84 L490.95 239.46 L490.06 239.08 L489.17 238.72 L488.26 238.36 L487.33 238.01 L486.39 237.68 L485.44 237.35 L484.46 237.03 L483.47 236.73 L482.47 236.45 L481.47 236.18Z" fill="#c44878"/><circle cx="480.80" cy="239.00" r="2.90" fill="#c44878"/><circle cx="548.00" cy="247.50" r="1.10" fill="#c44878"/><path d="M547.13 248.46 L547.31 248.61 L547.43 248.73 L547.53 248.85 L547.63 248.97 L547.70 249.11 L547.77 249.24 L547.82 249.39 L547.87 249.55 L547.90 249.72 L547.91 249.90 L547.91 250.10 L547.89 250.30 L547.85 250.52 L547.80 250.75 L547.72 251.00 L547.62 251.25 L547.50 251.51 L547.36 251.78 L547.19 252.05 L547.00 252.33 L546.79 252.62 L546.54 252.90 L546.28 253.19 L545.99 253.49 L545.67 253.78 L545.33 254.07 L544.96 254.36 L544.57 254.65 L544.15 254.93 L543.70 255.21 L543.23 255.49 L542.73 255.76 L542.20 256.02 L541.65 256.28 L541.07 256.53 L540.47 256.77 L539.84 257.00 L539.18 257.22 L538.49 257.43 L537.77 257.63 L538.23 259.37 L538.98 259.18 L539.72 258.98 L540.43 258.76 L541.11 258.54 L541.77 258.30 L542.41 258.04 L543.02 257.78 L543.61 257.51 L544.17 257.23 L544.71 256.94 L545.22 256.65 L545.71 256.34 L546.17 256.03 L546.61 255.71 L547.03 255.38 L547.42 255.05 L547.79 254.71 L548.13 254.37 L548.45 254.02 L548.75 253.67 L549.02 253.31 L549.27 252.95 L549.49 252.59 L549.69 252.22 L549.86 251.84 L550.01 251.47 L550.12 251.09 L550.22 250.71 L550.28 250.33 L550.31 249.94 L550.31 249.56 L550.28 249.18 L550.21 248.80 L550.11 248.43 L549.98 248.07 L549.81 247.72 L549.61 247.39 L549.38 247.07 L549.12 246.78 L548.87 246.54Z" fill="#c44878"/><circle cx="548.00" cy="247.50" r="1.30" fill="#c44878"/><circle cx="538.00" cy="258.50" r="0.90" fill="#c44878"/><path d="M547.00 252.40 L547.30 252.39 L547.60 252.38 L547.90 252.37 L548.20 252.36 L548.50 252.35 L548.81 252.34 L549.11 252.33 L549.41 252.32 L549.72 252.31 L550.02 252.30 L550.33 252.29 L550.64 252.28 L550.95 252.27 L551.26 252.26 L551.58 252.25 L551.90 252.24 L552.22 252.23 L552.54 252.22 L552.86 252.21 L553.19 252.20 L553.52 252.19 L553.85 252.18 L554.19 252.17 L554.52 252.16 L554.87 252.15 L555.21 252.14 L555.56 252.13 L555.91 252.12 L556.27 252.11 L556.63 252.10 L557.00 252.09 L557.37 252.08 L557.74 252.07 L558.12 252.06 L558.50 252.05 L558.89 252.04 L559.29 252.03 L559.69 252.02 L560.09 252.01 L560.50 252.00 L560.50 251.00 L560.09 250.99 L559.69 250.98 L559.29 250.97 L558.89 250.96 L558.50 250.95 L558.12 250.94 L557.74 250.93 L557.37 250.92 L557.00 250.91 L556.63 250.90 L556.27 250.89 L555.91 250.88 L555.56 250.87 L555.21 250.86 L554.87 250.85 L554.52 250.84 L554.19 250.83 L553.85 250.82 L553.52 250.81 L553.19 250.80 L552.86 250.79 L552.54 250.78 L552.22 250.77 L551.90 250.76 L551.58 250.75 L551.26 250.74 L550.95 250.73 L550.64 250.72 L550.33 250.71 L550.02 250.70 L549.72 250.69 L549.41 250.68 L549.11 250.67 L548.81 250.66 L548.50 250.65 L548.20 250.64 L547.90 250.63 L547.60 250.62 L547.30 250.61 L547.00 250.60Z" fill="#c44878"/><circle cx="547.00" cy="251.50" r="0.90" fill="#c44878"/><circle cx="560.50" cy="251.50" r="0.50" fill="#c44878"/><path d="M528.81 253.92 L529.07 253.56 L529.33 253.20 L529.60 252.84 L529.87 252.48 L530.14 252.13 L530.43 251.78 L530.71 251.44 L531.00 251.10 L531.30 250.76 L531.60 250.43 L531.91 250.10 L532.22 249.78 L532.53 249.47 L532.85 249.17 L533.18 248.87 L533.51 248.58 L533.84 248.30 L534.18 248.03 L534.53 247.77 L534.88 247.51 L535.23 247.27 L535.59 247.04 L535.95 246.82 L536.31 246.62 L536.69 246.42 L537.06 246.24 L537.44 246.07 L537.83 245.91 L538.22 245.76 L538.61 245.63 L539.01 245.51 L539.42 245.41 L539.83 245.32 L540.24 245.25 L540.67 245.19 L541.09 245.15 L541.53 245.12 L541.97 245.11 L542.42 245.12 L542.88 245.15 L543.35 245.16 L543.80 245.19 L544.24 245.24 L544.67 245.29 L545.09 245.36 L545.50 245.45 L545.91 245.54 L546.31 245.65 L546.71 245.77 L547.10 245.90 L547.49 246.04 L547.88 246.18 L548.26 246.34 L548.64 246.51 L549.03 246.69 L549.41 246.87 L549.80 247.06 L550.18 247.26 L550.57 247.46 L550.96 247.67 L551.36 247.88 L551.76 248.10 L552.16 248.32 L552.57 248.54 L552.99 248.76 L553.41 248.98 L553.83 249.20 L554.27 249.42 L554.71 249.64 L555.17 249.85 L555.63 250.06 L556.10 250.27 L556.59 250.47 L557.08 250.66 L557.59 250.84 L558.11 251.02 L558.65 251.19 L559.19 251.34 L559.76 251.49 L560.32 251.63 L560.68 250.37 L560.14 250.20 L559.62 250.01 L559.12 249.82 L558.64 249.62 L558.17 249.41 L557.72 249.19 L557.27 248.96 L556.84 248.73 L556.42 248.50 L556.00 248.26 L555.60 248.01 L555.20 247.76 L554.81 247.51 L554.42 247.26 L554.04 247.00 L553.66 246.74 L553.29 246.48 L552.91 246.22 L552.54 245.96 L552.16 245.71 L551.78 245.45 L551.41 245.19 L551.02 244.94 L550.64 244.69 L550.24 244.44 L549.84 244.20 L549.44 243.97 L549.02 243.74 L548.60 243.52 L548.17 243.31 L547.72 243.10 L547.26 242.91 L546.80 242.73 L546.31 242.56 L545.82 242.40 L545.31 242.26 L544.78 242.13 L544.24 242.02 L543.69 241.93 L543.12 241.85 L542.53 241.82 L541.96 241.82 L541.39 241.83 L540.82 241.87 L540.27 241.93 L539.72 242.01 L539.19 242.10 L538.66 242.22 L538.14 242.36 L537.62 242.51 L537.12 242.68 L536.63 242.87 L536.14 243.07 L535.67 243.28 L535.20 243.52 L534.74 243.76 L534.29 244.02 L533.85 244.29 L533.42 244.57 L533.00 244.86 L532.59 245.16 L532.18 245.47 L531.78 245.80 L531.39 246.12 L531.01 246.46 L530.64 246.81 L530.28 247.16 L529.92 247.51 L529.57 247.88 L529.23 248.24 L528.89 248.62 L528.56 248.99 L528.24 249.37 L527.93 249.75 L527.62 250.14 L527.32 250.53 L527.03 250.91 L526.74 251.30 L526.46 251.69 L526.19 252.08Z" fill="#e8c440"/><circle cx="527.50" cy="253.00" r="1.60" fill="#e8c440"/><circle cx="560.50" cy="251.00" r="0.65" fill="#e8c440"/><path d="M491.57 254.10 L492.56 254.05 L493.52 254.03 L494.48 254.02 L495.44 254.03 L496.40 254.06 L497.36 254.10 L498.33 254.16 L499.29 254.23 L500.25 254.31 L501.21 254.41 L502.17 254.51 L503.13 254.63 L504.09 254.76 L505.05 254.89 L506.00 255.03 L506.96 255.18 L507.91 255.34 L508.86 255.50 L509.81 255.66 L510.75 255.83 L511.69 256.00 L512.63 256.17 L513.57 256.35 L514.50 256.52 L515.43 256.69 L516.36 256.85 L517.29 257.02 L518.21 257.18 L519.12 257.33 L520.03 257.48 L520.94 257.62 L521.85 257.75 L522.75 257.88 L523.64 257.99 L524.53 258.09 L525.42 258.18 L526.30 258.26 L527.18 258.32 L528.05 258.37 L528.90 258.40 L529.60 258.41 L530.29 258.41 L530.96 258.40 L531.62 258.38 L532.27 258.34 L532.90 258.29 L533.51 258.23 L534.12 258.15 L534.71 258.07 L535.29 257.97 L535.85 257.86 L536.40 257.74 L536.94 257.61 L537.46 257.47 L537.97 257.32 L538.47 257.16 L538.96 257.00 L539.43 256.82 L539.89 256.63 L540.34 256.43 L540.77 256.23 L541.20 256.02 L541.61 255.80 L542.01 255.57 L542.40 255.34 L542.77 255.10 L543.14 254.86 L543.49 254.61 L543.83 254.35 L544.16 254.09 L544.48 253.82 L544.79 253.55 L545.09 253.28 L545.38 253.00 L545.66 252.72 L545.93 252.44 L546.19 252.15 L546.44 251.86 L546.68 251.57 L546.90 251.29 L545.10 249.71 L544.86 249.95 L544.63 250.18 L544.39 250.40 L544.15 250.63 L543.89 250.85 L543.64 251.06 L543.37 251.27 L543.09 251.48 L542.81 251.68 L542.52 251.88 L542.23 252.07 L541.92 252.26 L541.61 252.45 L541.29 252.62 L540.96 252.80 L540.62 252.96 L540.27 253.12 L539.91 253.28 L539.54 253.42 L539.16 253.57 L538.78 253.70 L538.38 253.83 L537.97 253.95 L537.55 254.06 L537.11 254.16 L536.67 254.26 L536.22 254.35 L535.75 254.43 L535.27 254.50 L534.78 254.56 L534.27 254.61 L533.75 254.65 L533.22 254.69 L532.68 254.71 L532.12 254.72 L531.54 254.72 L530.96 254.71 L530.35 254.68 L529.74 254.65 L529.10 254.60 L528.29 254.54 L527.49 254.46 L526.68 254.37 L525.86 254.27 L525.04 254.15 L524.20 254.02 L523.35 253.88 L522.50 253.73 L521.63 253.56 L520.76 253.39 L519.88 253.22 L519.00 253.03 L518.10 252.84 L517.20 252.65 L516.29 252.45 L515.37 252.24 L514.44 252.04 L513.51 251.83 L512.57 251.62 L511.62 251.42 L510.67 251.21 L509.71 251.01 L508.74 250.81 L507.77 250.62 L506.79 250.43 L505.81 250.24 L504.82 250.07 L503.82 249.90 L502.81 249.74 L501.80 249.59 L500.79 249.46 L499.77 249.33 L498.74 249.22 L497.71 249.12 L496.67 249.04 L495.63 248.98 L494.58 248.93 L493.53 248.90 L492.47 248.89 L491.43 248.90Z" fill="#5580c8"/><circle cx="491.50" cy="251.50" r="2.60" fill="#5580c8"/><circle cx="546.00" cy="250.50" r="1.20" fill="#5580c8"/><path d="M502.36 261.53 L502.60 261.38 L502.84 261.24 L503.09 261.10 L503.34 260.96 L503.60 260.82 L503.86 260.68 L504.13 260.54 L504.41 260.40 L504.68 260.26 L504.97 260.13 L505.26 259.99 L505.55 259.86 L505.84 259.72 L506.15 259.59 L506.45 259.46 L506.76 259.34 L507.07 259.21 L507.39 259.09 L507.71 258.97 L508.03 258.85 L508.36 258.73 L508.69 258.62 L509.02 258.51 L509.35 258.40 L509.69 258.29 L510.03 258.19 L510.37 258.09 L510.72 258.00 L511.07 257.91 L511.42 257.82 L511.77 257.74 L512.12 257.66 L512.48 257.59 L512.83 257.52 L513.19 257.45 L513.55 257.39 L513.91 257.34 L514.27 257.29 L514.64 257.24 L515.01 257.20 L514.99 255.80 L514.61 255.77 L514.23 255.74 L513.84 255.71 L513.45 255.69 L513.07 255.68 L512.68 255.67 L512.29 255.67 L511.90 255.67 L511.52 255.68 L511.13 255.69 L510.75 255.71 L510.36 255.73 L509.98 255.75 L509.60 255.78 L509.22 255.81 L508.84 255.85 L508.46 255.89 L508.09 255.93 L507.72 255.98 L507.34 256.03 L506.98 256.08 L506.61 256.14 L506.25 256.20 L505.89 256.26 L505.53 256.32 L505.18 256.39 L504.83 256.45 L504.48 256.52 L504.14 256.60 L503.80 256.67 L503.46 256.75 L503.13 256.82 L502.80 256.90 L502.48 256.98 L502.16 257.06 L501.84 257.14 L501.53 257.23 L501.23 257.31 L500.93 257.39 L500.64 257.47Z" fill="#c44878"/><circle cx="501.50" cy="259.50" r="2.20" fill="#c44878"/><circle cx="515.00" cy="256.50" r="0.70" fill="#c44878"/><path d="M509.41 266.95 L509.54 266.72 L509.66 266.50 L509.78 266.28 L509.90 266.06 L510.02 265.85 L510.14 265.65 L510.27 265.44 L510.39 265.25 L510.51 265.05 L510.63 264.86 L510.76 264.67 L510.88 264.49 L511.01 264.31 L511.13 264.13 L511.26 263.96 L511.39 263.79 L511.52 263.62 L511.65 263.46 L511.79 263.30 L511.92 263.15 L512.06 262.99 L512.20 262.84 L512.34 262.70 L512.48 262.55 L512.63 262.41 L512.78 262.28 L512.93 262.14 L513.08 262.01 L513.24 261.88 L513.40 261.76 L513.57 261.63 L513.73 261.52 L513.91 261.40 L514.08 261.28 L514.26 261.17 L514.44 261.07 L514.63 260.96 L514.82 260.86 L515.02 260.76 L515.23 260.66 L514.77 259.34 L514.53 259.39 L514.29 259.46 L514.05 259.52 L513.81 259.59 L513.58 259.67 L513.35 259.75 L513.12 259.84 L512.89 259.92 L512.67 260.02 L512.44 260.12 L512.22 260.22 L512.00 260.33 L511.79 260.44 L511.57 260.56 L511.36 260.68 L511.15 260.81 L510.94 260.94 L510.73 261.07 L510.53 261.21 L510.33 261.35 L510.13 261.50 L509.93 261.65 L509.73 261.81 L509.54 261.97 L509.34 262.13 L509.15 262.30 L508.96 262.47 L508.77 262.65 L508.58 262.83 L508.40 263.01 L508.21 263.20 L508.03 263.39 L507.84 263.59 L507.66 263.79 L507.48 263.99 L507.30 264.20 L507.12 264.41 L506.94 264.62 L506.76 264.84 L506.59 265.05Z" fill="#dc9040"/><circle cx="508.00" cy="266.00" r="1.70" fill="#dc9040"/><circle cx="515.00" cy="260.00" r="0.70" fill="#dc9040"/><path d="M516.25 260.50 L515.72 261.26 L515.21 262.06 L514.72 262.87 L514.25 263.70 L513.82 264.54 L513.40 265.40 L513.02 266.27 L512.65 267.15 L512.31 268.05 L512.00 268.95 L511.71 269.86 L511.44 270.78 L511.19 271.70 L510.97 272.63 L510.76 273.57 L510.58 274.51 L510.42 275.45 L510.28 276.39 L510.16 277.34 L510.05 278.28 L509.97 279.22 L509.91 280.16 L509.86 281.09 L509.84 282.02 L509.83 282.94 L509.83 283.86 L509.86 284.77 L509.90 285.67 L509.96 286.56 L510.03 287.45 L510.12 288.31 L510.23 289.17 L510.35 290.02 L510.48 290.85 L510.63 291.66 L510.79 292.46 L510.97 293.24 L511.16 294.00 L511.36 294.75 L511.58 295.49 L511.82 296.14 L512.04 296.75 L512.28 297.33 L512.51 297.91 L512.75 298.47 L512.99 299.02 L513.24 299.55 L513.48 300.07 L513.74 300.58 L513.99 301.08 L514.25 301.57 L514.51 302.04 L514.77 302.50 L515.04 302.95 L515.30 303.39 L515.57 303.82 L515.85 304.24 L516.12 304.65 L516.39 305.05 L516.67 305.44 L516.95 305.82 L517.23 306.19 L517.51 306.55 L517.79 306.90 L518.07 307.24 L518.35 307.58 L518.63 307.90 L518.91 308.22 L519.19 308.53 L519.47 308.84 L519.75 309.13 L520.03 309.42 L520.31 309.70 L520.58 309.98 L520.86 310.25 L521.13 310.52 L521.40 310.77 L521.67 311.03 L521.94 311.28 L522.19 311.52 L524.81 308.48 L524.54 308.27 L524.27 308.06 L524.01 307.84 L523.74 307.62 L523.48 307.39 L523.21 307.16 L522.94 306.93 L522.67 306.69 L522.40 306.45 L522.14 306.20 L521.87 305.94 L521.60 305.68 L521.33 305.41 L521.06 305.13 L520.79 304.85 L520.52 304.56 L520.26 304.26 L519.99 303.95 L519.72 303.64 L519.45 303.31 L519.19 302.98 L518.92 302.64 L518.66 302.28 L518.39 301.92 L518.13 301.55 L517.87 301.16 L517.61 300.77 L517.35 300.36 L517.09 299.94 L516.84 299.51 L516.58 299.07 L516.33 298.61 L516.08 298.15 L515.83 297.66 L515.59 297.17 L515.35 296.66 L515.11 296.13 L514.87 295.60 L514.64 295.04 L514.42 294.51 L514.20 293.88 L513.99 293.21 L513.79 292.52 L513.60 291.80 L513.42 291.07 L513.25 290.32 L513.10 289.55 L512.96 288.76 L512.83 287.96 L512.72 287.15 L512.62 286.32 L512.53 285.48 L512.47 284.63 L512.41 283.77 L512.38 282.90 L512.36 282.03 L512.35 281.15 L512.37 280.26 L512.40 279.37 L512.45 278.47 L512.51 277.58 L512.60 276.68 L512.70 275.78 L512.83 274.88 L512.97 273.99 L513.14 273.10 L513.32 272.21 L513.53 271.33 L513.75 270.45 L514.00 269.58 L514.27 268.72 L514.56 267.87 L514.88 267.03 L515.21 266.20 L515.57 265.38 L515.96 264.58 L516.37 263.79 L516.80 263.02 L517.26 262.26 L517.75 261.50Z" fill="#e8c440"/><circle cx="517.00" cy="261.00" r="0.90" fill="#e8c440"/><circle cx="523.50" cy="310.00" r="2.00" fill="#e8c440"/><path d="M517.00 281.10 L517.05 280.44 L517.12 279.79 L517.21 279.13 L517.30 278.48 L517.40 277.83 L517.52 277.18 L517.65 276.53 L517.79 275.89 L517.94 275.25 L518.10 274.62 L518.27 273.99 L518.45 273.37 L518.64 272.77 L518.83 272.17 L519.04 271.59 L519.26 271.01 L519.48 270.46 L519.71 269.92 L519.95 269.39 L520.19 268.88 L520.45 268.40 L520.70 267.93 L520.96 267.49 L521.23 267.06 L521.50 266.67 L521.77 266.29 L522.04 265.95 L522.31 265.63 L522.58 265.34 L522.85 265.09 L523.11 264.86 L523.37 264.67 L523.61 264.50 L523.85 264.37 L524.07 264.26 L524.28 264.19 L524.48 264.13 L524.66 264.10 L524.83 264.09 L525.00 264.10 L525.27 264.08 L525.48 264.08 L525.65 264.09 L525.78 264.10 L525.87 264.12 L525.93 264.12 L525.98 264.13 L526.03 264.15 L526.09 264.19 L526.15 264.26 L526.22 264.37 L526.28 264.53 L526.33 264.73 L526.36 264.99 L526.38 265.29 L526.37 265.63 L526.33 266.02 L526.26 266.44 L526.16 266.89 L526.03 267.37 L525.88 267.88 L525.69 268.42 L525.47 268.98 L525.22 269.57 L524.94 270.18 L524.63 270.81 L524.29 271.46 L523.92 272.13 L523.52 272.82 L523.10 273.53 L522.64 274.25 L522.15 274.98 L521.64 275.74 L521.10 276.50 L520.53 277.28 L519.93 278.07 L519.30 278.87 L518.65 279.68 L517.97 280.50 L517.26 281.33 L518.74 282.67 L519.51 281.86 L520.25 281.05 L520.96 280.26 L521.65 279.47 L522.31 278.69 L522.95 277.92 L523.55 277.16 L524.14 276.41 L524.69 275.67 L525.22 274.94 L525.72 274.23 L526.19 273.52 L526.64 272.83 L527.05 272.16 L527.44 271.49 L527.80 270.84 L528.14 270.21 L528.44 269.59 L528.72 268.98 L528.97 268.38 L529.18 267.80 L529.37 267.22 L529.53 266.66 L529.65 266.11 L529.74 265.56 L529.79 265.02 L529.80 264.49 L529.77 263.96 L529.68 263.42 L529.54 262.90 L529.33 262.39 L529.04 261.90 L528.69 261.45 L528.27 261.04 L527.80 260.70 L527.29 260.42 L526.74 260.21 L526.18 260.05 L525.60 259.95 L525.00 259.90 L524.42 259.94 L523.86 260.04 L523.31 260.19 L522.78 260.39 L522.28 260.63 L521.80 260.91 L521.35 261.22 L520.91 261.56 L520.50 261.93 L520.10 262.32 L519.72 262.74 L519.36 263.17 L519.02 263.63 L518.68 264.11 L518.36 264.61 L518.05 265.13 L517.75 265.66 L517.47 266.21 L517.19 266.78 L516.93 267.37 L516.68 267.96 L516.44 268.57 L516.20 269.20 L515.98 269.83 L515.77 270.48 L515.57 271.14 L515.39 271.80 L515.21 272.48 L515.04 273.16 L514.89 273.85 L514.74 274.55 L514.61 275.25 L514.49 275.95 L514.38 276.66 L514.29 277.37 L514.21 278.08 L514.13 278.79 L514.08 279.50 L514.03 280.21 L514.00 280.90Z" fill="#5580c8"/><circle cx="515.50" cy="281.00" r="1.50" fill="#5580c8"/><circle cx="518.00" cy="282.00" r="1.00" fill="#5580c8"/><path d="M532.01 262.26 L531.98 262.74 L531.93 263.16 L531.85 263.59 L531.75 264.03 L531.61 264.47 L531.45 264.93 L531.27 265.39 L531.05 265.87 L530.82 266.35 L530.55 266.84 L530.26 267.33 L529.95 267.83 L529.62 268.34 L529.27 268.84 L528.90 269.36 L528.51 269.88 L528.10 270.40 L527.68 270.92 L527.24 271.44 L526.80 271.97 L526.34 272.50 L525.87 273.03 L525.40 273.57 L524.92 274.10 L524.43 274.64 L523.94 275.17 L523.44 275.71 L522.95 276.25 L522.46 276.80 L521.97 277.34 L521.48 277.89 L520.99 278.43 L520.52 278.98 L520.04 279.53 L519.58 280.09 L519.13 280.64 L518.69 281.20 L518.26 281.76 L517.85 282.33 L517.37 283.03 L516.98 283.82 L516.69 284.49 L516.43 285.16 L516.21 285.83 L516.03 286.50 L515.88 287.17 L515.76 287.83 L515.68 288.50 L515.63 289.16 L515.62 289.81 L515.64 290.47 L515.69 291.11 L515.78 291.75 L515.89 292.38 L516.04 293.00 L516.22 293.62 L516.42 294.22 L516.65 294.82 L516.91 295.40 L517.19 295.97 L517.50 296.53 L517.84 297.08 L518.19 297.62 L518.57 298.15 L518.97 298.67 L519.39 299.17 L519.83 299.66 L520.29 300.14 L520.76 300.61 L521.25 301.07 L521.76 301.51 L522.29 301.94 L522.83 302.36 L523.39 302.77 L523.96 303.17 L524.55 303.55 L525.15 303.93 L525.76 304.29 L526.38 304.63 L526.99 304.96 L529.01 301.04 L528.43 300.76 L527.89 300.47 L527.36 300.18 L526.84 299.87 L526.34 299.56 L525.86 299.24 L525.38 298.91 L524.92 298.57 L524.48 298.22 L524.06 297.87 L523.65 297.51 L523.26 297.15 L522.89 296.78 L522.53 296.40 L522.19 296.01 L521.88 295.63 L521.58 295.23 L521.30 294.84 L521.04 294.43 L520.81 294.03 L520.59 293.62 L520.39 293.21 L520.21 292.79 L520.06 292.37 L519.92 291.94 L519.81 291.51 L519.72 291.08 L519.64 290.64 L519.60 290.20 L519.57 289.75 L519.56 289.29 L519.58 288.83 L519.63 288.36 L519.70 287.88 L519.79 287.40 L519.92 286.91 L520.07 286.41 L520.25 285.90 L520.46 285.38 L520.63 284.97 L520.92 284.62 L521.31 284.14 L521.72 283.65 L522.14 283.16 L522.58 282.66 L523.03 282.16 L523.50 281.66 L523.97 281.16 L524.46 280.65 L524.96 280.14 L525.46 279.63 L525.97 279.12 L526.48 278.60 L526.99 278.08 L527.51 277.56 L528.03 277.04 L528.55 276.51 L529.06 275.98 L529.57 275.44 L530.08 274.90 L530.58 274.36 L531.07 273.82 L531.55 273.26 L532.03 272.71 L532.49 272.15 L532.94 271.58 L533.38 271.01 L533.80 270.43 L534.20 269.84 L534.59 269.24 L534.95 268.64 L535.30 268.02 L535.62 267.40 L535.91 266.76 L536.18 266.11 L536.41 265.45 L536.62 264.77 L536.78 264.08 L536.91 263.38 L536.99 262.74Z" fill="#c44878"/><circle cx="534.50" cy="262.50" r="2.50" fill="#c44878"/><circle cx="528.00" cy="303.00" r="2.20" fill="#c44878"/><path d="M516.20 277.08 L516.25 276.71 L516.31 276.35 L516.37 276.00 L516.44 275.66 L516.52 275.31 L516.60 274.98 L516.68 274.64 L516.77 274.32 L516.87 273.99 L516.97 273.68 L517.07 273.37 L517.18 273.06 L517.29 272.76 L517.41 272.47 L517.53 272.18 L517.66 271.89 L517.79 271.62 L517.93 271.35 L518.06 271.08 L518.21 270.82 L518.35 270.57 L518.50 270.32 L518.66 270.08 L518.81 269.85 L518.98 269.63 L519.14 269.41 L519.31 269.19 L519.48 268.99 L519.65 268.79 L519.83 268.60 L520.00 268.41 L520.19 268.24 L520.37 268.07 L520.56 267.91 L520.75 267.75 L520.94 267.60 L521.13 267.46 L521.32 267.33 L521.52 267.20 L521.74 267.07 L520.26 264.93 L520.03 265.11 L519.79 265.30 L519.55 265.51 L519.32 265.72 L519.10 265.93 L518.88 266.16 L518.67 266.39 L518.46 266.63 L518.26 266.87 L518.06 267.12 L517.87 267.38 L517.69 267.64 L517.51 267.90 L517.34 268.18 L517.17 268.46 L517.01 268.74 L516.85 269.03 L516.70 269.32 L516.56 269.62 L516.42 269.93 L516.28 270.24 L516.16 270.55 L516.03 270.87 L515.92 271.19 L515.80 271.52 L515.70 271.85 L515.60 272.19 L515.50 272.53 L515.41 272.88 L515.33 273.23 L515.25 273.58 L515.18 273.94 L515.11 274.30 L515.05 274.67 L514.99 275.03 L514.94 275.41 L514.90 275.78 L514.86 276.16 L514.83 276.54 L514.80 276.92Z" fill="#a8c8e8"/><circle cx="515.50" cy="277.00" r="0.70" fill="#a8c8e8"/><circle cx="521.00" cy="266.00" r="1.30" fill="#a8c8e8"/><path d="M520.09 289.07 L520.34 289.28 L520.59 289.50 L520.84 289.71 L521.09 289.93 L521.34 290.15 L521.60 290.37 L521.86 290.59 L522.12 290.81 L522.39 291.04 L522.66 291.26 L522.93 291.48 L523.20 291.71 L523.48 291.93 L523.76 292.16 L524.04 292.38 L524.33 292.60 L524.62 292.82 L524.91 293.05 L525.21 293.27 L525.51 293.49 L525.82 293.70 L526.13 293.92 L526.44 294.14 L526.76 294.35 L527.08 294.56 L527.40 294.77 L527.73 294.97 L528.07 295.18 L528.41 295.38 L528.75 295.57 L529.10 295.77 L529.45 295.96 L529.81 296.14 L530.17 296.33 L530.54 296.50 L530.91 296.68 L531.29 296.84 L531.67 297.01 L532.06 297.17 L532.44 297.32 L533.56 293.68 L533.19 293.60 L532.84 293.52 L532.49 293.43 L532.15 293.34 L531.80 293.24 L531.46 293.14 L531.12 293.03 L530.78 292.91 L530.44 292.80 L530.11 292.68 L529.78 292.55 L529.44 292.42 L529.12 292.29 L528.79 292.15 L528.46 292.01 L528.14 291.87 L527.82 291.72 L527.50 291.57 L527.18 291.42 L526.86 291.26 L526.55 291.11 L526.23 290.95 L525.92 290.79 L525.61 290.62 L525.31 290.46 L525.00 290.29 L524.70 290.12 L524.40 289.95 L524.10 289.79 L523.80 289.62 L523.50 289.45 L523.21 289.28 L522.91 289.11 L522.62 288.93 L522.33 288.77 L522.04 288.60 L521.76 288.43 L521.47 288.26 L521.19 288.09 L520.91 287.93Z" fill="#a8c8e8"/><circle cx="520.50" cy="288.50" r="0.70" fill="#a8c8e8"/><circle cx="533.00" cy="295.50" r="1.90" fill="#a8c8e8"/></svg><div class="t" style="left:546.5px;top:272px;font-size:20px;color:#6479c6;letter-spacing:0px">ZZPcentrum.nl</div><div class="a" style="left:547px;top:290px;width:131px;height:1px;background:#7a8cc8"></div><div class="t" style="left:613px;top:295px;font-size:8.7px;color:#222;font-style:italic">inspireert zzp&#39;ers</div><div class="a" style="left:0;top:0;width:1180px;height:664px;background:radial-gradient(circle at 277.7px 258px, rgba(0,0,0,0) 199.5px, rgba(0,0,0,0.38) 200px)"></div><div class="a" style="left:75.6px;top:55.9px;width:404.2px;height:404.2px;border-radius:50%;border:3.8px solid #62a855"></div></body></html>
